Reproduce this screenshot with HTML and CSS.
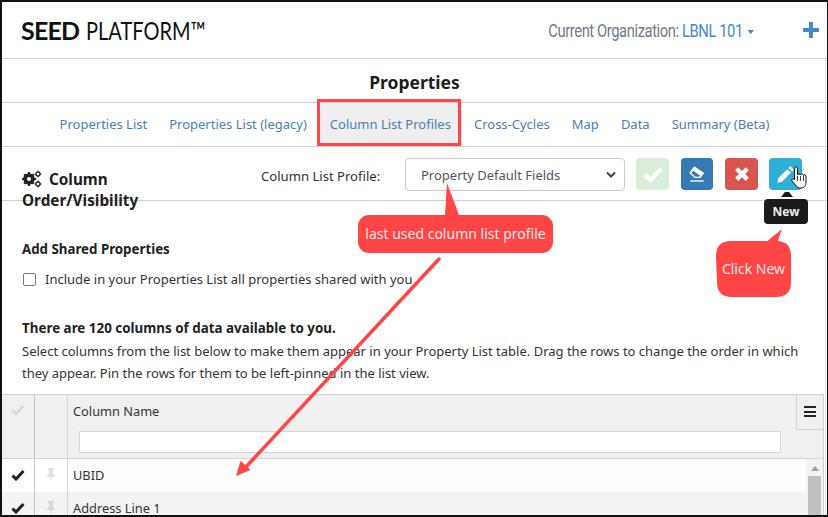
FILE: index.html
```html
<!DOCTYPE html>
<html lang="en">
<head>
<meta charset="utf-8">
<title>SEED Platform - Column List Profiles</title>
<link rel="stylesheet" href="styles.css">
</head>
<body>
<div class="frame">
  <header class="topbar">
    <div class="brand"><b>SEED</b> <span class="brand-light">PLATFORM™</span></div>
    <div class="org">Current Organization: <a>LBNL 101</a><span class="caret"></span></div>
    <svg class="plus" viewBox="0 0 16 16"><path d="M6 0h4v6h6v4h-6v6H6v-6H0V6h6z" fill="#428bca"/></svg>
  </header>
  <div class="pagetitle">Properties</div>
  <nav class="tabs">
    <a class="tab">Properties List</a>
    <a class="tab">Properties List (legacy)</a>
    <a class="tab active">Column List Profiles</a>
    <a class="tab">Cross-Cycles</a>
    <a class="tab">Map</a>
    <a class="tab">Data</a>
    <a class="tab">Summary (Beta)</a>
  </nav>
  <section class="toolbar">
    <h2 class="section-title">
      <svg class="gears" viewBox="0 0 20 18"><g fill="#222"><circle cx="7" cy="9" r="4.2" fill="none" stroke="#222" stroke-width="3.2"/><g stroke="#222" stroke-width="2.2"><path d="M7 2v14M0 9h14M2.2 4.2l9.6 9.6M11.8 4.2l-9.6 9.6"/></g></g><circle cx="7" cy="9" r="2" fill="#fff"/><g fill="none" stroke="#222" stroke-width="1.3"><circle cx="16" cy="4" r="2"/><circle cx="16" cy="14" r="2"/></g><g stroke="#222" stroke-width="1"><path d="M16 .5v1.5M16 6v1.5M12.5 4H14M18 4h1.5M16 10.500v1.500M16 16v1.500M12.500 14H14M18 14h1.500"/></g></svg>
      Column Order/Visibility
    </h2>
    <label class="profile-label">Column List Profile:</label>
    <div class="select"><span>Property Default Fields</span><svg class="chev" viewBox="0 0 10 7"><path d="M1 1.500l4 4 4-4" fill="none" stroke="#444" stroke-width="2"/></svg></div>
    <div class="btns">
      <button class="btn ok"><svg viewBox="0 0 16 16"><path d="M1.500 8.500l4.500 4.500 8.500-9" fill="none" stroke="#fff" stroke-width="3.400"/></svg></button>
      <button class="btn erase"><svg viewBox="0 0 16 16"><path d="M5.500 1l9 6-3.500 4.500H6L1 7z" fill="#fff"/><path d="M4.500 5l6.500 4.500-1.300 1H6.500L3 7.200z" fill="#337ab7"/><path d="M2 14.200h12" stroke="#fff" stroke-width="1.200"/></svg></button>
      <button class="btn del"><svg viewBox="0 0 16 16"><path d="M2.500 5l2.500-2.500 3 3 3-3L13.500 5l-3 3 3 3-2.500 2.500-3-3-3 3L2.500 11l3-3z" fill="#fff"/></svg></button>
      <button class="btn new"><svg viewBox="0 0 16 16"><path d="M12 1l3 3-1.500 1.500-3-3zM9.500 3.500l3 3L5 14l-3.800 1 .8-4z" fill="#fff"/></svg></button>
    </div>
  </section>
  <section class="shared">
    <h3 class="subhead shared-head">Add Shared Properties</h3>
    <label class="check"><span class="box"></span>Include in your Properties List all properties shared with you</label>
  </section>
  <section class="intro">
    <h3 class="subhead">There are 120 columns of data available to you.</h3>
    <p>Select columns from the list below to make them appear in your Property List table. Drag the rows to change the order in which they appear. Pin the rows for them to be left-pinned in the list view.</p>
  </section>
  <section class="grid">
    <div class="grid-head">
      <div class="cell-check head-cell"><svg class="tick" viewBox="0 0 14 12"><path d="M1.500 6.500l3.500 3.500 7.500-8" fill="none" stroke="#d8d8d8" stroke-width="2.600"/></svg></div>
      <div class="cell-pin head-cell"></div>
      <div class="cell-name head-name">
        <div class="head-label">Column Name</div>
        <div class="filter"></div>
      </div>
      <div class="menu"><span></span><span></span><span></span></div>
    </div>
    <div class="grid-body">
      <div class="rows">
        <div class="row">
          <div class="cell-check"><svg class="tick" viewBox="0 0 14 12"><path d="M1.500 6.500l3.500 3.500 7.500-8" fill="none" stroke="#222" stroke-width="3"/></svg></div>
          <div class="cell-pin"><svg class="pin" viewBox="0 0 10 14"><path d="M2 0h6v1.500L7 2.500V6l2 2v1H5.700L5 14l-.7-5H1V8l2-2V2.500L2 1.500z" fill="#e0e0e0"/></svg></div>
          <div class="cell-name">UBID</div>
        </div>
        <div class="row alt">
          <div class="cell-check"><svg class="tick" viewBox="0 0 14 12"><path d="M1.500 6.500l3.500 3.500 7.500-8" fill="none" stroke="#222" stroke-width="3"/></svg></div>
          <div class="cell-pin"><svg class="pin" viewBox="0 0 10 14"><path d="M2 0h6v1.500L7 2.500V6l2 2v1H5.700L5 14l-.7-5H1V8l2-2V2.500L2 1.500z" fill="#d8d8d8"/></svg></div>
          <div class="cell-name">Address Line 1</div>
        </div>
      </div>
      <div class="scrollbar"><svg class="sb-up" viewBox="0 0 8 5"><path d="M4 0l4 5H0z" fill="#a0a0a0"/></svg><div class="thumb"></div></div>
    </div>
  </section>

  <svg class="notes" viewBox="0 0 828 517">
    <path d="M825.500 59V517" stroke="#e6e6e6"/>
    <rect x="318.500" y="100.500" width="141" height="44" fill="none" stroke="#ff4747" stroke-width="3"/>
    <path d="M447 183l12 32h-14z" fill="#ff4545"/>
    <rect x="358" y="215" width="195" height="38" rx="11" fill="#ff4545"/>
    <path d="M782 229l-5 14h-12z" fill="#ff4545"/>
    <path d="M716 256q0-15 15-15h45q15 0 15 15v26q0 15-15 15h-44q-15 0-15-15z" fill="#ff4545"/>
    <path d="M439 259L244 469" stroke="#ff4545" stroke-width="3.500" stroke-linecap="round"/>
    <path d="M236 476l4.500-15 5 4 5 5z" fill="#ff4545"/>
    <path d="M785 192h4l4 5h-12z" fill="#1a1a1a"/>
    <g transform="translate(791.500 167)">
      <path d="M3 1.500c0-2 3-2 3 0V8c0-1.500 3-1.500 3 0 0-1.500 3-1.500 3 .5 0-1 2.500-1 2.500.5v6c0 4-2 6-5 6H8c-2 0-3-1.500-4-3L.5 14c-1-1.500 1-3 2.500-1.500z" fill="#fff" stroke="#111" stroke-width="1"/>
      <path d="M6 9v5M9 9v5M12 9v5" stroke="#111" stroke-width=".8"/>
    </g>
  </svg>
  <div class="tooltip">New</div>
  <div class="note note-profile">last used column list profile</div>
  <div class="note note-new">Click New</div>
</div>
</body>
</html>
```

FILE: styles.css
```css
* { box-sizing: border-box; }
html, body { margin: 0; padding: 0; background: #fff; }
body { font-family: "Noto Sans", "Open Sans", sans-serif; color: #222; font-size: 12.500px; }
.frame {
  position: relative;
  width: 828px;
  height: 517px;
  overflow: hidden;
  border: 1px solid #111;
  border-left-width: 2px;
  border-top-width: 2px;
  border-bottom-width: 2px;
  background: #fff;
}
.topbar {
  display: flex;
  align-items: center;
  height: 57px;
  padding: 0 8px 0 19px;
  border-bottom: 1px solid #d0d0d0;
}
.brand { font-family: "Lato", sans-serif; font-size: 25px; color: #111; white-space: nowrap; }
.brand b { font-weight: 700; letter-spacing: -.8px; }
.brand-light { display: inline-block; transform: scaleX(.8); transform-origin: left; }
.org { margin-left: auto; margin-right: 49px; font-family: "Roboto", sans-serif; font-size: 18px; color: #6e7c8a; letter-spacing: -.5px; transform: scaleX(.82); transform-origin: right; white-space: nowrap; }
.org a { color: #428bca; }
.caret { display: inline-block; margin-left: 6px; border: 4px solid transparent; border-top-color: #428bca; border-bottom: 0; vertical-align: middle; }
.plus { width: 16px; height: 16px; }
.pagetitle { height: 44px; display: flex; align-items: center; justify-content: center; font-size: 17.500px; font-weight: 700; border-bottom: 1px solid #d0d0d0; color: #1d1d1d; padding-top: 2px; }
.tabs { height: 44px; display: flex; justify-content: center; align-items: stretch; border-bottom: 1px solid #d0d0d0; }
.tab { display: flex; align-items: center; padding: 0 11px 2px; color: #4a7fb0; font-size: 13px; white-space: nowrap; }
.tab.active { background: #eee; padding: 0 11px 2px 12px; margin: 0 1px 0 0; }
.toolbar { position: relative; height: 54px; border-bottom: 1px solid #d0d0d0; display: flex; align-items: flex-start; padding: 11px 16px 0 20px; }
.section-title { width: 130px; margin: 11px 0 0; font-size: 15.300px; line-height: 21px; font-weight: 700; color: #222; }
.gears { width: 20px; height: 18px; vertical-align: -3px; margin-right: 3px; }
.profile-label { margin: 9px 0 0 109px; width: 144px; font-size: 13.100px; color: #333; }
.select { width: 220px; height: 33px; border: 1px solid #ccc; border-radius: 4px; display: flex; align-items: center; justify-content: space-between; padding: 0 8px 0 15px; color: #555; font-size: 13px; }
.chev { width: 10px; height: 7px; }
.btns { display: flex; gap: 12px; margin-left: 11px; }
.btn { width: 33px; height: 32px; border: 0; border-radius: 4px; padding: 0; display: flex; align-items: center; justify-content: center; }
.btn svg { width: 18px; height: 18px; }
.btn.ok { background: #d8eed8; }
.btn.ok svg { width: 20px; height: 20px; }
.btn.erase { background: #337ab7; width: 32px; }
.btn.del { background: #d9534f; }
.btn.del svg { width: 20px; height: 20px; }
.btn.new { background: #2eafd6; margin-left: -1px; }
.btn.new svg { width: 19px; height: 19px; }
.shared { padding: 39px 20px 0; height: 110px; }
.subhead { margin: 0; font-size: 13.400px; font-weight: 700; color: #222; line-height: 18px; }
.shared-head { font-size: 13.300px; }
.check { display: flex; align-items: center; margin-top: 12px; font-size: 13px; color: #333; }
.box { width: 13px; height: 13px; border: 1px solid #777; border-radius: 2px; margin: 0 9px 0 1px; }
.intro { padding: 8px 20px 0; height: 83px; }
.intro p { margin: 3px 0 0; font-size: 13px; line-height: 22px; color: #333; }
.grid { height: 130px; border-top: 1px solid #d0d0d0; width: 822px; border-right: 1px solid #d0d0d0; }
.grid-head { display: flex; height: 64px; background: #f0f0f0; border-bottom: 1px solid #d4d4d4; position: relative; }
.cell-check { width: 33px; flex: none; display: flex; justify-content: center; border-right: 1px solid #c4c4c4; }
.cell-pin { width: 33px; flex: none; display: flex; justify-content: center; border-right: 1px solid #d4d4d4; }
.head-cell { padding-top: 9px; }
.tick { width: 14px; height: 12px; }
.cell-name { padding-left: 5px; color: #333; font-size: 12.800px; }
.head-name { flex: 1; }
.head-label { margin-top: 7px; height: 19px; }
.filter { margin: 10px 42px 0 6px; height: 22px; background: #fff; border: 1px solid #d4d4d4; }
.menu { position: absolute; right: 0; top: 0; width: 27px; height: 35px; border-left: 1px solid #d0d0d0; border-bottom: 1px solid #d0d0d0; display: flex; flex-direction: column; gap: 2.500px; align-items: center; padding-top: 11px; }
.menu span { width: 12px; height: 2px; background: #222; }
.grid-body { display: flex; height: 66px; }
.rows { flex: 1; }
.row { display: flex; height: 33px; background: #fdfdfd; align-items: center; }
.row .cell-check, .row .cell-pin { height: 100%; align-items: center; padding-bottom: 2px; background: #fff; }
.row.alt { background: #f3f3f3; }
.row.alt .cell-check, .row.alt .cell-pin { background: #f3f3f3; }
.pin { width: 10px; height: 14px; }
.scrollbar { width: 17px; background: #f3f3f3; display: flex; flex-direction: column; align-items: center; }
.row .cell-name { padding-left: 5px; padding-bottom: 1px; }
.sb-up { width: 8px; height: 5px; margin: 7px 0 5px; }
.thumb { width: 13px; flex: 1; background: #c0c0c0; }
.notes { position: absolute; left: -2px; top: -2px; width: 828px; height: 517px; pointer-events: none; }
.tooltip { position: absolute; left: 762px; top: 197px; width: 44px; height: 25px; border-radius: 4px; background: #1a1a1a; color: #eee; font-size: 12px; font-weight: 700; display: flex; align-items: center; justify-content: center; }
.note { position: absolute; color: #ffe9e9; display: flex; align-items: center; justify-content: center; font-size: 14px; padding-bottom: 1px; }
.note-profile { left: 356px; top: 213px; width: 195px; height: 38px; }
.note-new { left: 714px; top: 239px; width: 75px; height: 56px; }
```
